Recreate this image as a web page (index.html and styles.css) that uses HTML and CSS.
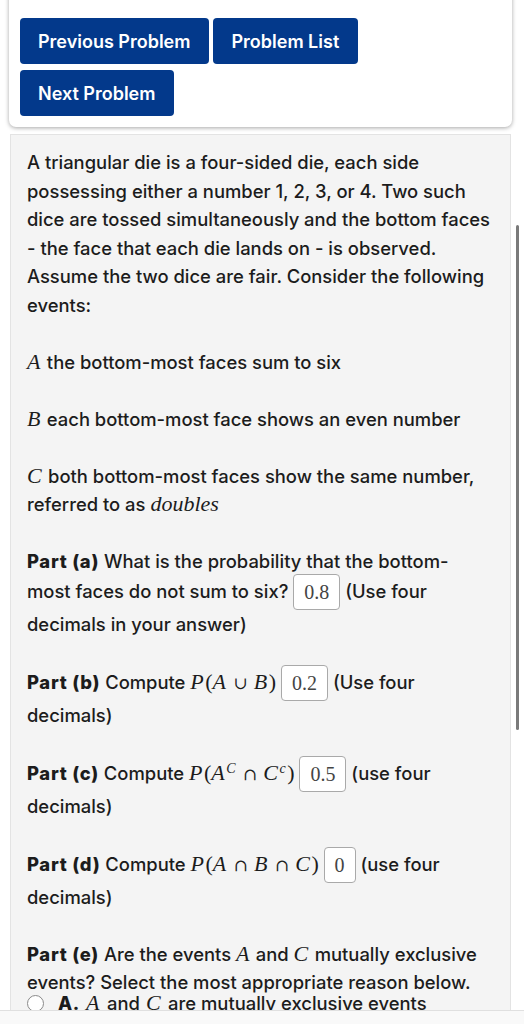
FILE: index.html
```html
<!DOCTYPE html>
<html>
<head>
<meta charset="utf-8">
<link rel="stylesheet" href="styles.css">
</head>
<body>
<div class="card">
  <div class="nav">
    <a class="btn">Previous Problem</a>
    <a class="btn">Problem List</a>
    <a class="btn">Next Problem</a>
  </div>
</div>
<div class="panel">
  <p>A triangular die is a four-sided die, each side possessing either a number 1, 2, 3, or 4. Two such dice are tossed simultaneously and the bottom faces - the face that each die lands on - is observed. Assume the two dice are fair. Consider the following events:</p>
  <p><span class="m">A</span> the bottom-most faces sum to six</p>
  <p><span class="m">B</span> each bottom-most face shows an even number</p>
  <p><span class="m">C</span> both bottom-most faces show the same number, referred to as <span class="m word">doubles</span></p>
  <p><b>Part (a)</b> What is the probability that the bottom-most faces do not sum to six? <span class="inp">0.8</span> (Use four decimals in your answer)</p>
  <p><b>Part (b)</b> Compute <span class="m">P</span><span class="mr">(</span><span class="m">A</span><span class="op">∪</span><span class="m">B</span><span class="mr">)</span> <span class="inp">0.2</span> (Use four decimals)</p>
  <p><b>Part (c)</b> Compute <span class="m">P</span><span class="mr">(</span><span class="m">A<sup>C</sup></span><span class="op">∩</span><span class="m">C<sup>c</sup></span><span class="mr">)</span> <span class="inp">0.5</span> (use four decimals)</p>
  <p><b>Part (d)</b> Compute <span class="m">P</span><span class="mr">(</span><span class="m">A</span><span class="op">∩</span><span class="m">B</span><span class="op">∩</span><span class="m">C</span><span class="mr">)</span> <span class="inp">0</span> (use four decimals)</p>
  <p class="last"><b>Part (e)</b> Are the events <span class="m">A</span> and <span class="m">C</span> mutually exclusive events? Select the most appropriate reason below.</p>
  <div class="options">
    <div class="opt"><span class="radio"></span><b>A.</b> <span class="m">A</span> and <span class="m">C</span> are mutually exclusive events</div>
    <div class="opt"><span class="radio"></span><b>B.</b> <span class="m">A</span> and <span class="m">C</span> are not mutually exclusive events</div>
  </div>
</div>
<div class="bottombar"></div>
<div class="scrollbar"></div>
</body>
</html>
```
FILE: styles.css
```css
html, body {
  margin: 0;
  padding: 0;
  background: #ffffff;
}
body {
  font-family: Inter, "Noto Sans", "DejaVu Sans", sans-serif;
  color: #1c1c1c;
  overflow: hidden;
}
.card {
  margin: -10px 12px 0 9px;
  padding: 28px 11px 11px;
  background: #fff;
  border-radius: 0 0 7px 7px;
  box-shadow: 0 1px 4px rgba(0,0,0,0.35);
}
.nav {
  display: flex;
  flex-wrap: wrap;
  column-gap: 4px;
  row-gap: 6px;
}
.btn {
  display: flex;
  align-items: center;
  height: 46px;
  box-sizing: border-box;
  padding: 0 19px 0 18px;
  background: #03398b;
  color: #fff;
  font-weight: 600;
  font-size: 18px;
  border-radius: 4px;
}
.panel {
  margin: 7px 13px 0 10px;
  padding: 13px 19px 0 16px;
  background: #f4f4f4;
  border: 1px solid #e3e3e3;
  border-bottom: none;
  font-size: 18.4px;
  font-weight: 500;
  line-height: 28.5px;
  height: 1000px;
}
.panel p {
  margin: 0 0 28.5px;
}
.panel p.last {
  margin-bottom: 0;
}
.panel b {
  font-weight: 800;
  letter-spacing: 0.7px;
}
.m {
  font-family: "Liberation Serif", "DejaVu Serif", serif;
  font-style: italic;
  font-weight: 400;
  font-size: 22px;
  line-height: 20px;
  letter-spacing: 1.5px;
}
.m.word {
  letter-spacing: 0;
}
.m sup {
  font-size: 14px;
  line-height: 0;
  vertical-align: 0.5em;
}
.mr {
  font-family: "Liberation Serif", "DejaVu Serif", serif;
  font-weight: 400;
  font-size: 22px;
  line-height: 20px;
}
.op {
  font-family: "DejaVu Serif", serif;
  font-weight: 400;
  font-size: 17px;
  line-height: 20px;
  padding: 0 6px;
}
.inp {
  display: inline-block;
  box-sizing: border-box;
  height: 36px;
  line-height: 34px;
  padding: 0 10px;
  min-width: 32px;
  margin-top: -2px;
  text-align: center;
  background: #fff;
  border: 1px solid #a9a9a9;
  border-radius: 4px;
  vertical-align: middle;
  font-family: "Liberation Serif", "DejaVu Serif", serif;
  font-weight: 400;
  font-size: 20px;
  color: #444;
}
.options {
  margin-top: -4px;
}
.opt {
  display: flex;
  align-items: center;
  gap: 6px;
  line-height: 21px;
}
.radio {
  width: 15px;
  height: 15px;
  border: 1.5px solid #8a8a8a;
  border-radius: 50%;
  background: #fff;
  margin-right: 8px;
  flex: none;
}
.bottombar {
  position: fixed;
  left: 0;
  right: 0;
  bottom: 0;
  height: 13px;
  background: #f9f9f9;
  border-top: 1px solid #e0e0e0;
}
.scrollbar {
  position: fixed;
  left: 516px;
  top: 225px;
  width: 3px;
  height: 505px;
  border-radius: 2px;
  background: #7a7a7a;
}
```
